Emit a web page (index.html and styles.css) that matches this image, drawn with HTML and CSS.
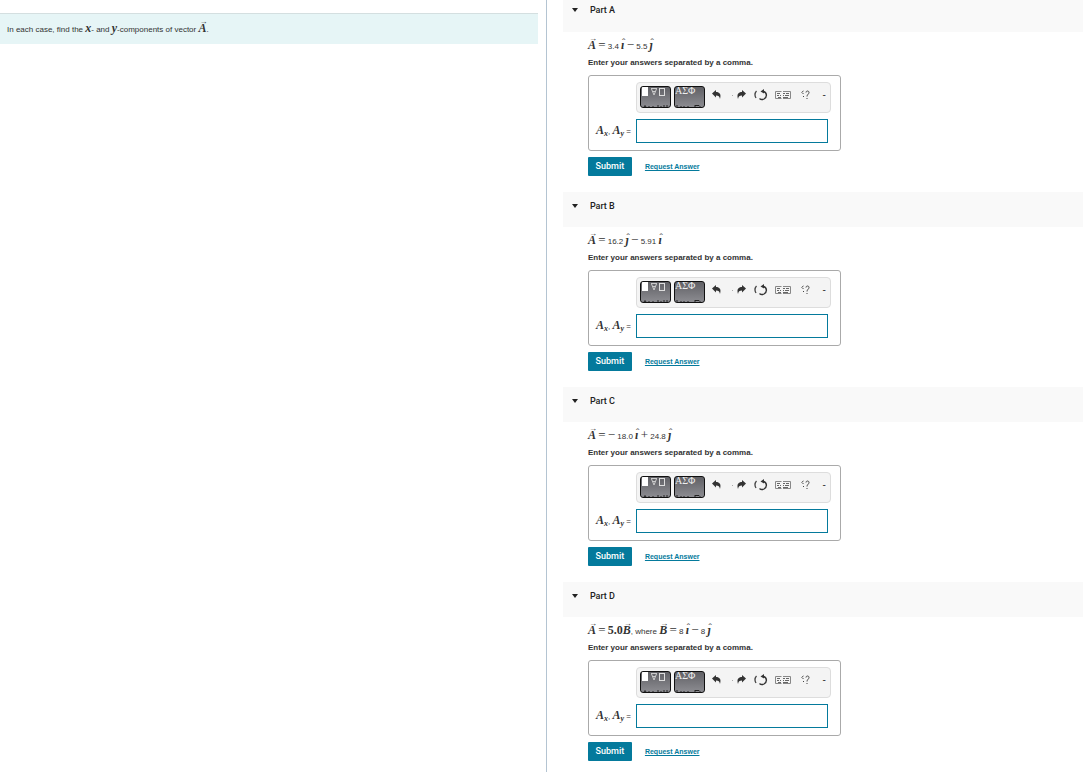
FILE: index.html
```html
<!DOCTYPE html>
<html lang="en">
<head>
  <meta charset="UTF-8">
  <meta name="viewport" content="width=device-width, initial-scale=1.0">
  <title>Vector Components</title>
  <link rel="stylesheet" href="styles.css">
</head>
<body>

  <!-- Shared toolbar icons -->
  <svg class="icon-defs" aria-hidden="true">
    <symbol id="templates" viewBox="0 0 29 20">
      <rect x="1" y="0" width="6" height="9" fill="#fff"/>
      <path d="M10 1.500h6M10.500 2l2.500 6 2.500-6M12 4.500h2" fill="none" stroke="#ccc"/>
      <rect x="18.500" y="1.500" width="5" height="7" fill="none" stroke="#ddd"/>
      <path d="M3 20l1-1.500 1 1.500M8 20v-1M12 20v-1M17 20v-2M20 20v-1M23 20v-2M26 20v-2" fill="none" stroke="#222"/>
    </symbol>
    <symbol id="marks" viewBox="0 0 29 4">
      <path d="M2 4V2M6 4V3M9 4V3M13 4V3M20 4V2M20 2.500h4l1 1V4" fill="none" stroke="#222"/>
    </symbol>
    <symbol id="undo" viewBox="0 0 10 10">
      <path d="M0 3.500L4 0v2c3.500 0 5.500 2 4 7-.3-2.500-1.500-3.500-4-3.500V7.500z" fill="#333"/>
    </symbol>
    <symbol id="redo" viewBox="0 0 14 10">
      <path d="M14 3.500L10 0v2C6.500 2 4.500 4 6 9c.3-2.500 1.500-3.500 4-3.500v2z" fill="#333"/>
      <rect x="0" y="5" width="1" height="1" fill="#aaa"/>
    </symbol>
    <symbol id="reset" viewBox="0 0 14 12">
      <path d="M2.500 2C.8 4 .8 7 2 9" fill="none" stroke="#444" stroke-width="1.300"/>
      <path d="M9.500 2.500c3.500 1 4 5.500.5 7.500-1.500.8-3.500.5-4.500-.5" fill="none" stroke="#333" stroke-width="1.400"/>
      <path d="M6.500 2.500L10 0v4.500z" fill="#333"/>
    </symbol>
    <symbol id="keyboard" viewBox="0 0 16 8">
      <path d="M6.500.5h-6v7h6M8 .5h7.500v7H8" fill="none" stroke="#888"/>
      <path d="M2 2.500h3M8 2.500h2M11 2.500h3M2 4.500h2M5 4.500h1M8 4.500h1M10 4.500h4M3 6.500h3M8 6.500h5" stroke="#666"/>
    </symbol>
    <symbol id="help" viewBox="0 0 9 10">
      <path d="M.5 2.500L2.500 1M2 3v1M5 2.500C5 .5 8 .5 8 2.500c0 1.500-2 2-2 4" fill="none" stroke="#444"/>
      <path d="M5.500 8h1v1h-1zM2 6h1v1H2z" fill="#444"/>
    </symbol>
  </svg>

  <main class="layout">
    <section class="question">
      <p class="problem">In each case, find the <b class="math">x</b>- and <b class="math">y</b>-components of vector <b class="math vec">A</b>.</p>
    </section>

    <section class="answers">

      <article class="part">
        <h2 class="part-header"><span class="caret"></span>Part A</h2>
        <div class="part-body">
          <p class="equation"><b class="math vec">A</b> <span class="op">=</span> 3.4 <b class="math hat">ı</b> <span class="op">−</span> 5.5 <b class="math hat">ȷ</b></p>
          <p class="hint">Enter your answers separated by a comma.</p>
          <div class="answer-box">
            <div class="toolbar">
              <button class="pad" type="button" aria-label="Templates"><svg width="29" height="20"><use href="#templates"/></svg></button>
              <button class="pad" type="button" aria-label="Symbols"><span>ΑΣΦ</span><svg width="29" height="4"><use href="#marks"/></svg></button>
              <button class="tool" type="button" aria-label="Undo"><svg width="10" height="10"><use href="#undo"/></svg></button>
              <button class="tool" type="button" aria-label="Redo"><svg width="14" height="10"><use href="#redo"/></svg></button>
              <button class="tool" type="button" aria-label="Reset"><svg width="14" height="12"><use href="#reset"/></svg></button>
              <button class="tool" type="button" aria-label="Keyboard shortcuts"><svg width="16" height="8"><use href="#keyboard"/></svg></button>
              <button class="tool" type="button" aria-label="Help"><svg width="9" height="10"><use href="#help"/></svg></button>
              <span class="dash">-</span>
            </div>
            <label for="answer-a"><b class="math">A<sub>x</sub></b>, <b class="math">A<sub>y</sub></b> =</label>
            <input type="text" id="answer-a">
          </div>
          <div class="actions">
            <button class="submit" type="button">Submit</button>
            <a href="#">Request Answer</a>
          </div>
        </div>
      </article>

      <article class="part">
        <h2 class="part-header"><span class="caret"></span>Part B</h2>
        <div class="part-body">
          <p class="equation"><b class="math vec">A</b> <span class="op">=</span> 16.2 <b class="math hat">ȷ</b> <span class="op">−</span> 5.91 <b class="math hat">ı</b></p>
          <p class="hint">Enter your answers separated by a comma.</p>
          <div class="answer-box">
            <div class="toolbar">
              <button class="pad" type="button" aria-label="Templates"><svg width="29" height="20"><use href="#templates"/></svg></button>
              <button class="pad" type="button" aria-label="Symbols"><span>ΑΣΦ</span><svg width="29" height="4"><use href="#marks"/></svg></button>
              <button class="tool" type="button" aria-label="Undo"><svg width="10" height="10"><use href="#undo"/></svg></button>
              <button class="tool" type="button" aria-label="Redo"><svg width="14" height="10"><use href="#redo"/></svg></button>
              <button class="tool" type="button" aria-label="Reset"><svg width="14" height="12"><use href="#reset"/></svg></button>
              <button class="tool" type="button" aria-label="Keyboard shortcuts"><svg width="16" height="8"><use href="#keyboard"/></svg></button>
              <button class="tool" type="button" aria-label="Help"><svg width="9" height="10"><use href="#help"/></svg></button>
              <span class="dash">-</span>
            </div>
            <label for="answer-b"><b class="math">A<sub>x</sub></b>, <b class="math">A<sub>y</sub></b> =</label>
            <input type="text" id="answer-b">
          </div>
          <div class="actions">
            <button class="submit" type="button">Submit</button>
            <a href="#">Request Answer</a>
          </div>
        </div>
      </article>

      <article class="part">
        <h2 class="part-header"><span class="caret"></span>Part C</h2>
        <div class="part-body">
          <p class="equation"><b class="math vec">A</b> <span class="op">=</span> <span class="op">−</span> 18.0 <b class="math hat">ı</b> <span class="op">+</span> 24.8 <b class="math hat">ȷ</b></p>
          <p class="hint">Enter your answers separated by a comma.</p>
          <div class="answer-box">
            <div class="toolbar">
              <button class="pad" type="button" aria-label="Templates"><svg width="29" height="20"><use href="#templates"/></svg></button>
              <button class="pad" type="button" aria-label="Symbols"><span>ΑΣΦ</span><svg width="29" height="4"><use href="#marks"/></svg></button>
              <button class="tool" type="button" aria-label="Undo"><svg width="10" height="10"><use href="#undo"/></svg></button>
              <button class="tool" type="button" aria-label="Redo"><svg width="14" height="10"><use href="#redo"/></svg></button>
              <button class="tool" type="button" aria-label="Reset"><svg width="14" height="12"><use href="#reset"/></svg></button>
              <button class="tool" type="button" aria-label="Keyboard shortcuts"><svg width="16" height="8"><use href="#keyboard"/></svg></button>
              <button class="tool" type="button" aria-label="Help"><svg width="9" height="10"><use href="#help"/></svg></button>
              <span class="dash">-</span>
            </div>
            <label for="answer-c"><b class="math">A<sub>x</sub></b>, <b class="math">A<sub>y</sub></b> =</label>
            <input type="text" id="answer-c">
          </div>
          <div class="actions">
            <button class="submit" type="button">Submit</button>
            <a href="#">Request Answer</a>
          </div>
        </div>
      </article>

      <article class="part">
        <h2 class="part-header"><span class="caret"></span>Part D</h2>
        <div class="part-body">
          <p class="equation"><b class="math vec">A</b> <span class="op">=</span> <b class="num">5.0</b><b class="math vec">B</b>, where <b class="math vec">B</b> <span class="op">=</span> 8 <b class="math hat">ı</b> <span class="op">−</span> 8 <b class="math hat">ȷ</b></p>
          <p class="hint">Enter your answers separated by a comma.</p>
          <div class="answer-box">
            <div class="toolbar">
              <button class="pad" type="button" aria-label="Templates"><svg width="29" height="20"><use href="#templates"/></svg></button>
              <button class="pad" type="button" aria-label="Symbols"><span>ΑΣΦ</span><svg width="29" height="4"><use href="#marks"/></svg></button>
              <button class="tool" type="button" aria-label="Undo"><svg width="10" height="10"><use href="#undo"/></svg></button>
              <button class="tool" type="button" aria-label="Redo"><svg width="14" height="10"><use href="#redo"/></svg></button>
              <button class="tool" type="button" aria-label="Reset"><svg width="14" height="12"><use href="#reset"/></svg></button>
              <button class="tool" type="button" aria-label="Keyboard shortcuts"><svg width="16" height="8"><use href="#keyboard"/></svg></button>
              <button class="tool" type="button" aria-label="Help"><svg width="9" height="10"><use href="#help"/></svg></button>
              <span class="dash">-</span>
            </div>
            <label for="answer-d"><b class="math">A<sub>x</sub></b>, <b class="math">A<sub>y</sub></b> =</label>
            <input type="text" id="answer-d">
          </div>
          <div class="actions">
            <button class="submit" type="button">Submit</button>
            <a href="#">Request Answer</a>
          </div>
        </div>
      </article>

    </section>
  </main>

</body>
</html>
```
FILE: styles.css
```css
* {
  box-sizing: border-box;
}

body {
  margin: 0;
  background-color: #fff;
  color: #333;
  font-family: "Liberation Sans", Arial, sans-serif;
  font-size: 8px;
}

p, h2 {
  margin: 0;
}

.icon-defs {
  display: none;
}

.layout {
  display: grid;
  grid-template-columns: 101fr 99fr;
  min-height: 100vh;
}

/* Left side */
.question {
  border-right: 1px solid #b4c4d2;
  padding: 13px 8px 0 0;
}

.problem {
  background-color: #e6f5f6;
  border-top: 1px solid #d4dfe0;
  padding: 8px 7px 6px;
  line-height: 16px;
}

/* Math */
.math, .num {
  font-family: "Liberation Serif", "Times New Roman", serif;
  font-size: 12px;
  line-height: 12px;
}

.math {
  font-style: italic;
}

.math sub {
  font-size: 8px;
  line-height: 1;
  vertical-align: -2px;
}

.vec, .hat {
  position: relative;
  display: inline-block;
}

.vec::before, .hat::before {
  position: absolute;
  font-style: normal;
  font-weight: normal;
  line-height: 8px;
}

.vec::before {
  content: "→";
  top: -4px;
  left: 1px;
  font-size: 8px;
}

.hat::before {
  content: "ˆ";
  top: 0;
  left: 1px;
  font-size: 10px;
}

.op {
  font-family: "Liberation Serif", "Times New Roman", serif;
  font-size: 13px;
  line-height: 12px;
}

/* Right side */
.answers {
  padding-left: 16px;
}

.part-header {
  display: flex;
  align-items: flex-start;
  height: 35px;
  padding: 8px 9px;
  background-color: #f9f9f9;
  color: #222;
  font-family: Roboto, sans-serif;
  font-size: 9px;
  font-weight: 500;
  line-height: 12px;
}

/* the panel is scrolled slightly past its top */
.part:first-child .part-header {
  height: 32px;
  padding-top: 4px;
}

.caret {
  margin: 4px 12px 0 0;
  border: 3px solid transparent;
  border-top: 4px solid #222;
  border-bottom: 0;
}

.part-body {
  padding: 7px 25px 16px;
}

.equation {
  height: 16px;
  line-height: 16px;
  white-space: nowrap;
}

.hint {
  height: 20px;
  line-height: 16px;
  font-weight: bold;
}

.answer-box {
  display: grid;
  grid-template-columns: 39px 195px;
  column-gap: 1px;
  row-gap: 6px;
  width: 253px;
  height: 76px;
  padding: 6px 8px 7px 7px;
  border: 1px solid #aaa;
  border-radius: 3px;
}

.toolbar {
  grid-column: 2;
  display: flex;
  align-items: flex-start;
  gap: 3px;
  height: 31px;
  padding: 3px;
  background-color: #f4f4f4;
  border: 1px solid #ddd;
  border-radius: 4px;
}

.pad {
  flex: none;
  width: 31px;
  height: 22px;
  padding: 0;
  overflow: hidden;
  border: 1px solid #111;
  border-radius: 3px;
  background: linear-gradient(#606065, #8c8c91);
  color: #eee;
  font-family: "Liberation Serif", serif;
  font-size: 10px;
  line-height: 8px;
}

.pad svg, .pad span {
  display: block;
}

.pad span {
  height: 16px;
  text-align: left;
}

.tool {
  display: flex;
  align-items: center;
  justify-content: center;
  flex: none;
  width: 19px;
  height: 17px;
  padding: 0;
  border: 0;
  background: none;
}

.dash {
  flex: 1;
  text-align: right;
  padding-right: 1px;
  font-size: 10px;
  line-height: 17px;
}

.answer-box label {
  align-self: center;
  text-align: right;
  padding-right: 5px;
  white-space: nowrap;
}

.answer-box input {
  width: 192px;
  height: 24px;
  padding: 2px 5px;
  border: 1px solid #047a9c;
  background-color: #fff;
  font-size: 10px;
}

.actions {
  display: flex;
  align-items: center;
  gap: 13px;
  margin-top: 6px;
}

.submit {
  width: 44px;
  height: 19px;
  padding: 0 0 1px;
  border: 0;
  border-radius: 1px;
  background-color: #047a9c;
  color: #fff;
  font-family: Roboto, sans-serif;
  font-size: 9px;
  font-weight: 500;
}

.actions a {
  color: #047a9c;
  font-size: 7px;
  font-weight: bold;
}
```
